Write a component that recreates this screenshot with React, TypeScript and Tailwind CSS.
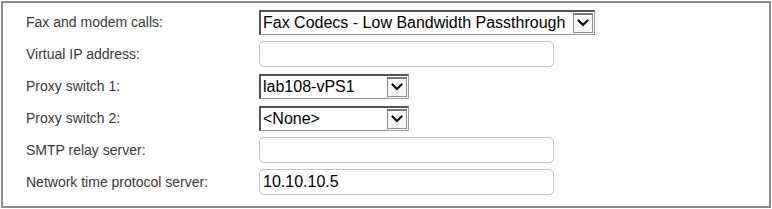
import { ReactNode } from 'react'

function Chevron() {
  return (
    <svg width="12" height="8" viewBox="0 0 12 8" className="block">
      <path d="M1.5 1.5 L6 6 L10.5 1.5" fill="none" stroke="#111" strokeWidth="2.2" strokeLinecap="round" strokeLinejoin="round" />
    </svg>
  )
}

function FakeSelect({ value, width }: { value: string; width: string }) {
  return (
    <div
      className={`${width} h-[25px] flex items-center justify-between bg-white border border-[#9a9a9a] border-t-2 border-l-2 border-t-[#555] border-l-[#555] pl-[2px] pr-[1px]`}
    >
      <span className="text-[16px] leading-none text-black">{value}</span>
      <span className="w-[20px] h-[20px] flex items-center justify-center bg-[#f6f5f7] border border-[#8e8e8e] border-t-2 border-t-[#777]">
        <Chevron />
      </span>
    </div>
  )
}

function FakeInput({ value = '' }: { value?: string }) {
  return (
    <div className="w-[295px] h-[26px] flex items-center rounded-[5px] border border-[#c4c4c4] bg-white px-[3px]">
      <span className="text-[16px] leading-none text-black">{value}</span>
    </div>
  )
}

function Row({ label, children }: { label: string; children: ReactNode }) {
  return (
    <div className="h-[32px] flex items-center">
      <div className="w-[256px] pl-[23px] text-[14px] text-[#383838]">{label}</div>
      {children}
    </div>
  )
}

export default function App() {
  return (
    <div className="w-[772px] h-[209px] bg-white pt-[1px] pl-[1px]" style={{ fontFamily: '"Liberation Sans", Arial, sans-serif' }}>
      <div className="w-[770px] h-[207px] border-2 border-[#8c8c8c] pt-[3px] flex flex-col">
        <Row label="Fax and modem calls:">
          <FakeSelect value="Fax Codecs - Low Bandwidth Passthrough" width="w-[336px]" />
        </Row>
        <Row label="Virtual IP address:">
          <FakeInput />
        </Row>
        <Row label="Proxy switch 1:">
          <FakeSelect value="lab108-vPS1" width="w-[150px]" />
        </Row>
        <Row label="Proxy switch 2:">
          <FakeSelect value="<None>" width="w-[150px]" />
        </Row>
        <Row label="SMTP relay server:">
          <FakeInput />
        </Row>
        <Row label="Network time protocol server:">
          <FakeInput value="10.10.10.5" />
        </Row>
      </div>
    </div>
  )
}
